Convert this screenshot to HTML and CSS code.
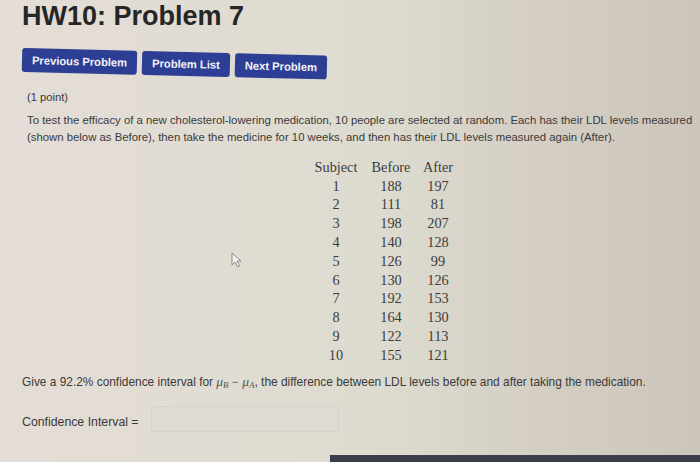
FILE: index.html
```html
<!DOCTYPE html>
<html>
<head>
<meta charset="utf-8">
<link rel="stylesheet" href="styles.css">
</head>
<body>
<div class="page">
  <h1 class="title">HW10: Problem 7</h1>
  <div class="nav">
    <span class="btn">Previous Problem</span>
    <span class="btn">Problem List</span>
    <span class="btn">Next Problem</span>
  </div>
  <div class="problem">
    <div class="points">(1 point)</div>
    <p class="para">To test the efficacy of a new cholesterol-lowering medication, 10 people are selected at random. Each has their LDL levels measured<br>(shown below as Before), then take the medicine for 10 weeks, and then has their LDL levels measured again (After).</p>
  </div>
  <div class="data">
    <span>Subject</span><span>Before</span><span>After</span>
    <span>1</span><span>188</span><span>197</span>
    <span>2</span><span>111</span><span>81</span>
    <span>3</span><span>198</span><span>207</span>
    <span>4</span><span>140</span><span>128</span>
    <span>5</span><span>126</span><span>99</span>
    <span>6</span><span>130</span><span>126</span>
    <span>7</span><span>192</span><span>153</span>
    <span>8</span><span>164</span><span>130</span>
    <span>9</span><span>122</span><span>113</span>
    <span>10</span><span>155</span><span>121</span>
  </div>
  <p class="give">Give a 92.2% confidence interval for <span class="math">μ<sub>B</sub></span> <span class="minus">−</span> <span class="math">μ<sub>A</sub></span>, the difference between LDL levels before and after taking the medication.</p>
  <div class="answer">
    <span class="label">Confidence Interval =</span>
    <span class="input"></span>
  </div>
</div>
<svg class="cursor" width="12" height="16" viewBox="0 0 12 16"><path d="M1 1 L1 13 L4 10 L6.5 15 L8.5 14 L6 9 L10 9 Z" fill="#f4f2ee" stroke="#8a8a86" stroke-width="1" stroke-linejoin="round"/></svg>
<div class="bezel"></div>
</body>
</html>
```
FILE: styles.css
```css
html, body {
  margin: 0;
  padding: 0;
}
body {
  width: 700px;
  height: 462px;
  overflow: hidden;
  position: relative;
  background: linear-gradient(90deg, #e5ddd7 0%, #e0dcd2 35%, #dddbcf 55%, #d5cfc5 75%, #ccc5ba 100%);
  font-family: "Liberation Sans", Arial, sans-serif;
  color: #3a3a3a;
}
.page {
  padding-left: 22px;
}
.title {
  margin: 0;
  font-size: 27px;
  line-height: 32px;
  font-weight: bold;
  color: #262626;
}
.nav {
  margin-top: 16px;
  display: flex;
  gap: 5px;
  transform: rotate(1.4deg);
  transform-origin: left center;
}
.btn {
  display: inline-flex;
  align-items: center;
  justify-content: center;
  height: 24px;
  padding: 0 10px;
  background: #2d3f94;
  color: #f2f2f8;
  font-size: 11.2px;
  font-weight: bold;
  border-radius: 3px;
}
.problem {
  padding-left: 5px;
}
.points {
  margin-top: 18px;
  font-size: 11.2px;
  line-height: 14px;
}
.para {
  margin: 8px 0 0;
  font-size: 11.35px;
  line-height: 17px;
  white-space: nowrap;
}
.data {
  margin: 12px 0 0 289px;
  display: grid;
  grid-template-columns: 50px 60px 34px;
  grid-auto-rows: 18.8px;
  align-items: center;
  justify-items: center;
  font-family: "Liberation Serif", "Times New Roman", serif;
  font-size: 14.3px;
  color: #3c3c3c;
}
.give {
  margin: 8px 0 0;
  font-size: 11.9px;
  line-height: 17px;
  white-space: nowrap;
}
.math {
  font-family: "Liberation Serif", serif;
  font-style: italic;
  font-size: 13.5px;
  color: #555;
}
.math sub {
  font-size: 9px;
  vertical-align: -2px;
}
.minus {
  color: #666;
}
.answer {
  margin-top: 12px;
  display: flex;
  align-items: center;
  gap: 12px;
}
.label {
  font-size: 12.3px;
  padding-top: 6px;
}
.input {
  display: block;
  width: 186px;
  height: 24px;
  border: 1px solid #d6d2c8;
  background: #dedcd2;
  border-radius: 2px;
}
.cursor {
  position: absolute;
  left: 231px;
  top: 252px;
}
.bezel {
  position: absolute;
  left: 330px;
  right: 0;
  bottom: 0;
  height: 7px;
  background: #3b3f49;
}
```
